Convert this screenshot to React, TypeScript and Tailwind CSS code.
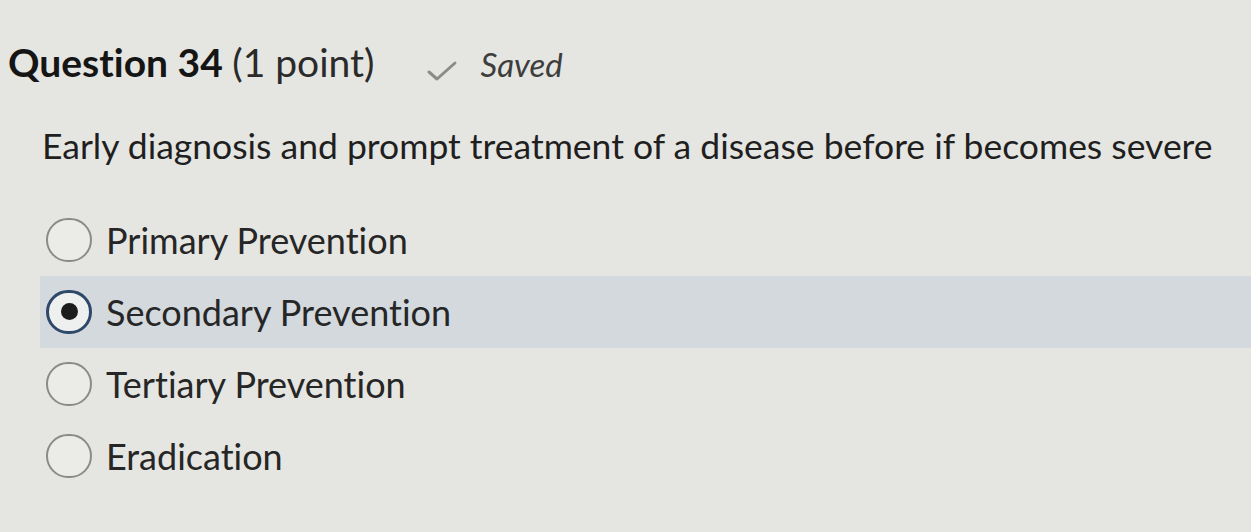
import React from 'react';

const options = [
  'Primary Prevention',
  'Secondary Prevention',
  'Tertiary Prevention',
  'Eradication',
];

function Radio({ checked }: { checked: boolean }) {
  if (checked) {
    return (
      <span className="flex h-[44px] w-[46px] shrink-0 items-center justify-center rounded-full border-[3px] border-[#2d4868] bg-[#eef0f0]">
        <span className="h-[17px] w-[17px] rounded-full bg-[#1c1c1c]" />
      </span>
    );
  }
  return <span className="h-[44px] w-[46px] shrink-0 rounded-full border-2 border-[#8a8a88] bg-[#ebebe8]" />;
}

export default function App() {
  const selected = 1;
  return (
    <div className="h-[532px] w-[1251px] overflow-hidden bg-[#e5e5e1] font-['Lato',sans-serif] text-[#232323] [font-variant-ligatures:none]">
      {/* Header */}
      <div className="flex items-baseline pl-[8px] pt-[38px]">
        <h2 className="text-[39px] leading-[48px] font-bold text-[#151515]">
          Question 34 <span className="font-normal text-[#2a2a2a]">(1 point)</span>
        </h2>
        <span className="ml-[52px] flex items-baseline gap-[22px] text-[#555]">
          <svg width="32" height="22" viewBox="0 0 32 22" className="self-center translate-y-[6px]">
            <path d="M3 12 L11 19 L29 3" fill="none" stroke="#8b8b8b" strokeWidth="3" strokeLinecap="round" strokeLinejoin="round" />
          </svg>
          <span className="text-[33px] italic text-[#3d3d3d]">Saved</span>
        </span>
      </div>

      {/* Question text */}
      <p className="mt-[34px] pl-[42px] text-[35.5px] leading-[44px] text-[#1f1f1f]">
        Early diagnosis and prompt treatment of a disease before if becomes severe
      </p>

      {/* Options */}
      <div className="mt-[36px] flex flex-col">
        {options.map((o, i) => (
          <div
            key={o}
            className={`flex h-[72px] items-center gap-[14px] ${i === selected ? 'ml-[40px] bg-[#d3d9dc] pl-[6px]' : 'pl-[46px]'}`}
          >
            <Radio checked={i === selected} />
            <span className="text-[36px] leading-[40px] text-[#262626]">{o}</span>
          </div>
        ))}
      </div>
    </div>
  );
}
